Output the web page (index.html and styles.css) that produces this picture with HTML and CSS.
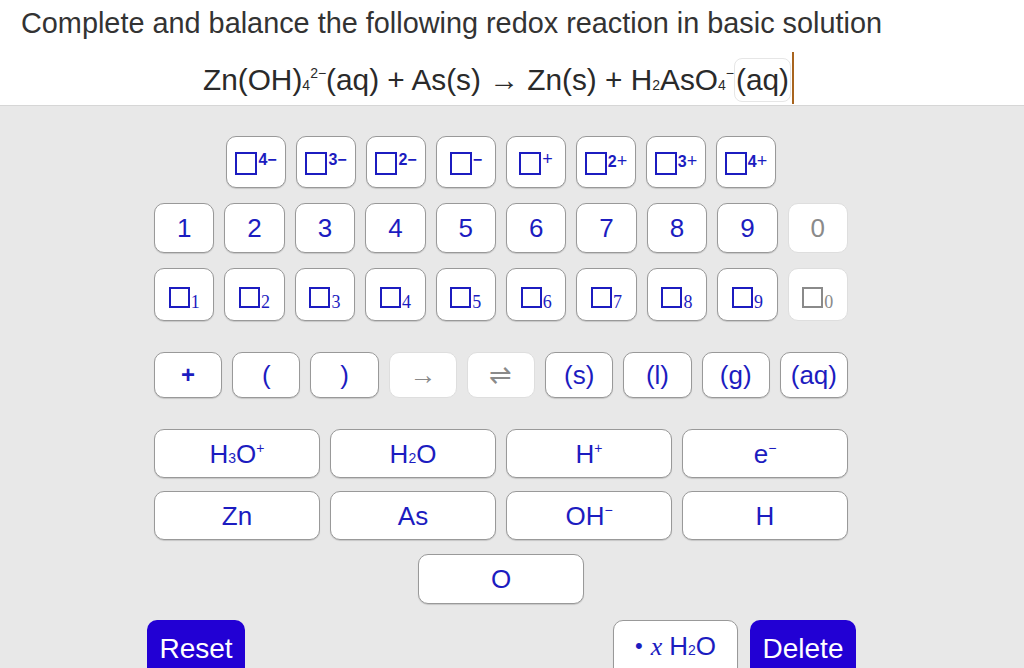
FILE: index.html
```html
<!DOCTYPE html>
<html>
<head>
<meta charset="utf-8">
<link rel="stylesheet" href="styles.css">
</head>
<body>
<div class="header">
  <div class="title">Complete and balance the following redox reaction in basic solution</div>
  <div class="equation"><span class="eqtext">Zn(OH)<sub>4</sub><sup>2−</sup>(aq) + As(s) → Zn(s) + H<sub>2</sub>AsO<sub>4</sub><sup>−</sup><span class="last">(aq)</span></span><span class="cursor"></span></div>
</div>
<div class="pad">
  <div class="keypad">
    <div class="row charges">
      <button class="key"><span class="box"></span><span class="chg">4−</span></button>
      <button class="key"><span class="box"></span><span class="chg">3−</span></button>
      <button class="key"><span class="box"></span><span class="chg">2−</span></button>
      <button class="key"><span class="box"></span><span class="chg">−</span></button>
      <button class="key"><span class="box"></span><span class="chg thin">+</span></button>
      <button class="key"><span class="box"></span><span class="chg">2<i>+</i></span></button>
      <button class="key"><span class="box"></span><span class="chg">3<i>+</i></span></button>
      <button class="key"><span class="box"></span><span class="chg">4<i>+</i></span></button>
    </div>
    <div class="row digits">
      <button class="key">1</button>
      <button class="key">2</button>
      <button class="key">3</button>
      <button class="key">4</button>
      <button class="key">5</button>
      <button class="key">6</button>
      <button class="key">7</button>
      <button class="key">8</button>
      <button class="key">9</button>
      <button class="key off">0</button>
    </div>
    <div class="row subs">
      <button class="key"><span class="box"></span><span class="sb">1</span></button>
      <button class="key"><span class="box"></span><span class="sb">2</span></button>
      <button class="key"><span class="box"></span><span class="sb">3</span></button>
      <button class="key"><span class="box"></span><span class="sb">4</span></button>
      <button class="key"><span class="box"></span><span class="sb">5</span></button>
      <button class="key"><span class="box"></span><span class="sb">6</span></button>
      <button class="key"><span class="box"></span><span class="sb">7</span></button>
      <button class="key"><span class="box"></span><span class="sb">8</span></button>
      <button class="key"><span class="box"></span><span class="sb">9</span></button>
      <button class="key off"><span class="box"></span><span class="sb">0</span></button>
    </div>
    <div class="row symbols">
      <button class="key plus">+</button>
      <button class="key">(</button>
      <button class="key">)</button>
      <button class="key off arrow">→</button>
      <button class="key off arrow">⇌</button>
      <button class="key">(s)</button>
      <button class="key">(l)</button>
      <button class="key">(g)</button>
      <button class="key">(aq)</button>
    </div>
    <div class="row species">
      <button class="key"><span class="lbl">H<sub>3</sub>O<sup>+</sup></span></button>
      <button class="key"><span class="lbl">H<sub>2</sub>O</span></button>
      <button class="key"><span class="lbl">H<sup>+</sup></span></button>
      <button class="key"><span class="lbl">e<sup>−</sup></span></button>
    </div>
    <div class="row species second">
      <button class="key"><span class="lbl">Zn</span></button>
      <button class="key"><span class="lbl">As</span></button>
      <button class="key"><span class="lbl">OH<sup>−</sup></span></button>
      <button class="key"><span class="lbl">H</span></button>
    </div>
    <div class="row single">
      <button class="key">O</button>
    </div>
  </div>
  <div class="actions">
    <button class="action">Reset</button>
    <div class="spacer"></div>
    <button class="key water"><span class="lbl"><span class="dot">•</span><i>x</i>H<sub>2</sub>O</span></button>
    <button class="action">Delete</button>
  </div>
</div>
</body>
</html>
```

FILE: styles.css
```css
* { box-sizing: border-box; }
html, body { margin: 0; padding: 0; }
body {
  width: 1024px;
  height: 668px;
  overflow: hidden;
  font-family: "Liberation Sans", Arial, sans-serif;
  background: #e8e8e8;
}
.header {
  background: #fff;
  height: 106px;
  border-bottom: 1px solid #d6d6d6;
  color: #333;
}
.title {
  padding: 6px 0 0 21px;
  font-size: 28.85px;
  line-height: 34px;
}
.equation {
  margin-top: 12px;
  padding-left: 203px;
  height: 52px;
  display: flex;
  align-items: center;
  color: #2a2a2a;
}
.eqtext {
  font-size: 29.8px;
  line-height: 40px;
  margin-top: 4px;
}
.equation sub, .equation sup {
  font-size: 14px;
  line-height: 0;
  position: relative;
  vertical-align: baseline;
}
.equation sub { top: 0; }
.equation sup { top: -12px; }
.equation .last {
  display: inline-block;
  border: 1px solid #e6e6e6;
  border-radius: 8px;
  line-height: 42px;
  padding: 0 1px;
}
.cursor {
  width: 2px;
  height: 52px;
  background: #a8641e;
  margin-left: 1px;
}
.pad {
  padding-top: 30px;
}
.keypad {
  width: 694px;
  margin-left: 154px;
}
.row {
  display: grid;
  column-gap: 10px;
}
.key {
  font-family: "Liberation Sans", Arial, sans-serif;
  background: #fff;
  border: 1px solid #999;
  border-radius: 10px;
  color: #1c1cc0;
  font-size: 26px;
  padding: 0;
  display: flex;
  align-items: center;
  justify-content: center;
  box-shadow: 0 1px 1px rgba(0,0,0,0.15);
}
.key.off {
  border-color: #dedede;
  color: #8a8a8a;
  box-shadow: none;
}
.charges {
  grid-template-columns: repeat(8, 60px);
  justify-content: center;
  height: 52px;
}
.digits {
  grid-template-columns: repeat(10, 1fr);
  height: 50px;
  margin-top: 15px;
}
.subs {
  grid-template-columns: repeat(10, 1fr);
  height: 53px;
  margin-top: 15px;
}
.symbols {
  grid-template-columns: repeat(9, 1fr);
  height: 46px;
  margin-top: 31px;
}
.species {
  grid-template-columns: repeat(4, 1fr);
  height: 49px;
  margin-top: 31px;
}
.species.second { margin-top: 13px; }
.single {
  grid-template-columns: 166px;
  justify-content: center;
  height: 50px;
  margin-top: 14px;
}
.box {
  display: inline-block;
  width: 22px;
  height: 23px;
  border: 2px solid #1c1cc0;
}
.off .box { border-color: #8a8a8a; }
.charges .key { padding-top: 2px; }
.chg {
  font-size: 16px;
  font-weight: bold;
  align-self: flex-start;
  margin-top: 12px;
  margin-left: 1px;
}
.chg i, .chg.thin { font-style: normal; font-weight: normal; font-size: 18px; }
.chg.thin { margin-top: 10px; }
.subs .key { align-items: flex-end; padding-bottom: 12px; }
.subs .box { width: 21px; height: 21px; }
.sb {
  font-family: "Liberation Serif", "Times New Roman", serif;
  font-size: 18px;
  line-height: 14px;
  margin-left: 1px;
  margin-bottom: -1px;
}
.plus { font-weight: bold; font-size: 24px; }
.arrow { font-size: 27px; }
.lbl { display: inline; line-height: 30px; }
.key sub, .key sup {
  font-size: 14px;
  line-height: 0;
  vertical-align: baseline;
  position: relative;
}
.key sub { top: 0; }
.key sup { top: -10px; }
.actions {
  display: flex;
  margin-top: 16px;
  margin-left: 147px;
  width: 709px;
}
.spacer { flex: 1; }
.action {
  font-family: "Liberation Sans", Arial, sans-serif;
  background: #2200d4;
  color: #fff;
  border: none;
  border-radius: 10px;
  font-size: 28px;
  height: 60px;
  padding: 0 0 2px;
  width: 98px;
}
.action:last-child { width: 106px; }
.water {
  width: 125px;
  height: 60px;
  margin-right: 12px;
  padding-bottom: 6px;
  font-size: 26px;
}
.water .dot { font-size: 22px; margin-right: 8px; position: relative; top: -2px; }
.water i { font-family: "Liberation Serif", serif; margin-right: 7px; }
```
